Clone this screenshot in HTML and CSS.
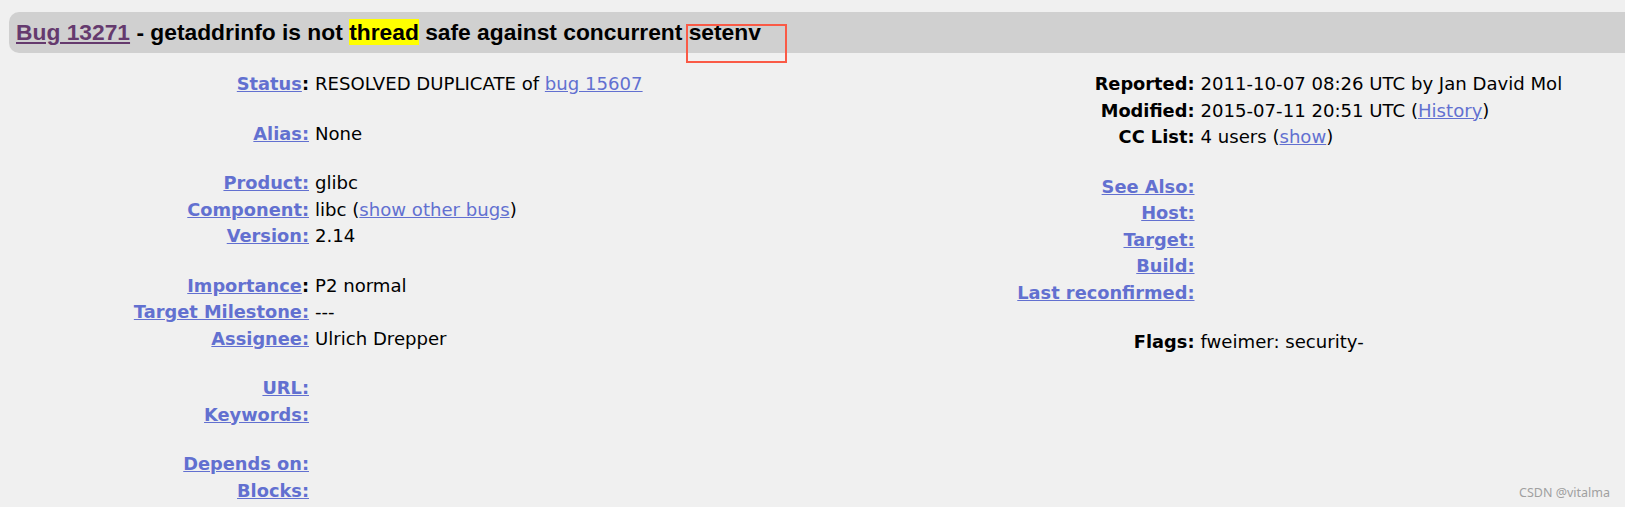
FILE: index.html
```html
<!DOCTYPE html>
<html lang="en">
<head>
    <meta charset="UTF-8">
    <title>Bug 13271 - getaddrinfo is not thread safe against concurrent setenv</title>
    <link rel="stylesheet" href="styles.css">
</head>
<body>

<div class="bug-title">
    <a href="#" class="bug-id">Bug 13271</a> - getaddrinfo is not <span class="hl">thread</span> safe against concurrent setenv
</div>

<!-- red annotation box over "setenv" -->
<div class="mark"></div>

<div class="bug-fields">
    <div class="col col-left">
        <table>
            <tr><th><a href="#">Status</a>:</th><td>RESOLVED DUPLICATE of <a href="#" class="plain">bug 15607</a></td></tr>
            <tr class="spacer"><td colspan="2"></td></tr>
            <tr><th><a href="#">Alias:</a></th><td>None</td></tr>
            <tr class="spacer"><td colspan="2"></td></tr>
            <tr><th><a href="#">Product:</a></th><td>glibc</td></tr>
            <tr><th><a href="#">Component:</a></th><td>libc (<a href="#" class="plain">show other bugs</a>)</td></tr>
            <tr><th><a href="#">Version:</a></th><td>2.14</td></tr>
            <tr class="spacer"><td colspan="2"></td></tr>
            <tr><th><a href="#">Importance</a>:</th><td>P2 normal</td></tr>
            <tr><th><a href="#">Target Milestone:</a></th><td>---</td></tr>
            <tr><th><a href="#">Assignee:</a></th><td>Ulrich Drepper</td></tr>
            <tr class="spacer"><td colspan="2"></td></tr>
            <tr><th><a href="#">URL:</a></th><td></td></tr>
            <tr><th><a href="#">Keywords:</a></th><td></td></tr>
            <tr class="spacer"><td colspan="2"></td></tr>
            <tr><th><a href="#">Depends on:</a></th><td></td></tr>
            <tr><th><a href="#">Blocks:</a></th><td></td></tr>
        </table>
    </div>

    <div class="col col-right">
        <table>
            <tr><th>Reported:</th><td>2011-10-07 08:26 UTC by Jan David Mol</td></tr>
            <tr><th>Modified:</th><td>2015-07-11 20:51 UTC (<a href="#" class="plain">History</a>)</td></tr>
            <tr><th>CC List:</th><td>4 users (<a href="#" class="plain">show</a>)</td></tr>
            <tr class="spacer"><td colspan="2"></td></tr>
            <tr><th><a href="#">See Also:</a></th><td></td></tr>
            <tr><th><a href="#">Host:</a></th><td></td></tr>
            <tr><th><a href="#">Target:</a></th><td></td></tr>
            <tr><th><a href="#">Build:</a></th><td></td></tr>
            <tr><th><a href="#">Last reconfirmed:</a></th><td></td></tr>
            <tr class="spacer"><td colspan="2"></td></tr>
            <tr><th>Flags:</th><td>fweimer: security-</td></tr>
        </table>
    </div>
</div>

<div class="watermark">CSDN @vitalma</div>

</body>
</html>
```

FILE: styles.css
```css
body {
    margin: 0;
    background-color: #f0f0f0;
    color: #000;
    font-family: "DejaVu Sans", Verdana, sans-serif;
    font-size: 18px;
    overflow: hidden;
}

a {
    color: #6270d0;
}

.bug-title {
    margin: 12px 0 0 9px;
    padding: 8px 7px;
    background-color: #d0d0d0;
    border-radius: 10px 0 0 10px;
    font-family: "Liberation Sans", Arial, sans-serif;
    font-weight: bold;
    font-size: 22.8px;
    line-height: 25px;
    white-space: nowrap;
}

.bug-title .bug-id {
    color: #653a6e;
}

.hl {
    background-color: #ffff00;
}

.mark {
    position: absolute;
    left: 686px;
    top: 24px;
    width: 97px;
    height: 35px;
    border: 2px solid #fa5a46;
}

.bug-fields {
    display: flex;
    padding-top: 18px;
}

.col {
    width: 50%;
}

table {
    border-spacing: 0;
}

th, td {
    padding: 0;
    height: 26.5px;
    line-height: 26.5px;
    white-space: nowrap;
    vertical-align: middle;
}

th {
    text-align: right;
    font-weight: bold;
    font-size: 17.8px;
}

td {
    padding-left: 6px;
    font-weight: normal;
    font-size: 18.1px;
}

.col-left th {
    width: 300px;
    padding-left: 9px;
}

.col-right th {
    width: 382px;
}

.spacer td {
    height: 23px;
    padding: 0;
}

.watermark {
    position: absolute;
    right: 15px;
    bottom: 6px;
    font-family: "Noto Sans", sans-serif;
    font-size: 12.5px;
    color: #a0a0a0;
}
```
